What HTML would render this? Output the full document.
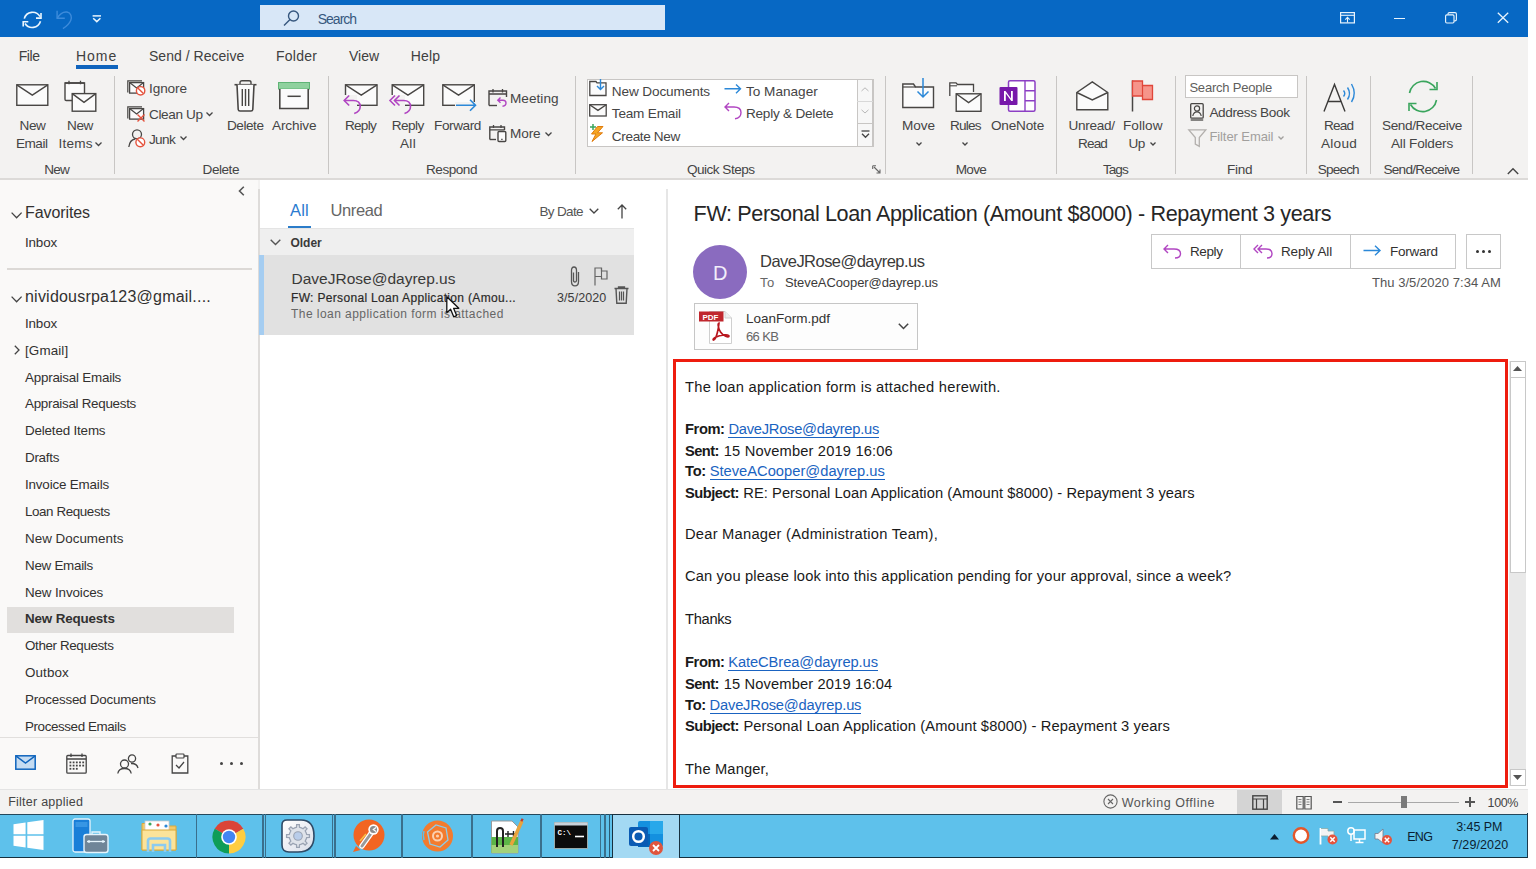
<!DOCTYPE html>
<html><head><meta charset="utf-8">
<style>
*{margin:0;padding:0;box-sizing:border-box}
html,body{width:1536px;height:869px;overflow:hidden;background:#fff;font-family:"Liberation Sans",sans-serif;color:#262626}
.a{position:absolute}
.t{position:absolute;white-space:nowrap;line-height:1}
svg{position:absolute;overflow:visible}
#win{position:absolute;left:0;top:0;width:1528px;height:858px;background:#f3f2f1;overflow:hidden}
</style></head><body>
<div id="win">
<div class="a" style="left:0px;top:0px;width:1528px;height:37px;background:#0768c4;"></div>
<div class="a" style="left:260px;top:5px;width:405px;height:25px;background:#d8e7f7;"></div>
<svg style="left:22px;top:10px;" width="21" height="20" viewBox="0 0 21 20"><g fill="none" stroke="#eaf5fd" stroke-width="1.6"><path d="M2.3 8.6A8.6 8.6 0 0 1 18 6.6"/><path d="M18.5 11.3A8.6 8.6 0 0 1 3 13.5"/><path d="M14 8.1H19V3"/><path d="M6.3 11.8H1.2V16.5"/></g></svg>
<svg style="left:55px;top:9px;" width="18" height="21" viewBox="0 0 18 21"><path d="M2.1 1.8V9.3H9.8" fill="none" stroke="#3d8bdb" stroke-width="1.4"/><path d="M2.3 9.1C5 4.5 9 2.6 12 3C16 3.6 17.2 8 15.7 11.5C14.2 15 11.2 17.6 7.9 19.6" fill="none" stroke="#3d8bdb" stroke-width="1.4"/></svg>
<svg style="left:92px;top:14px;" width="10" height="9" viewBox="0 0 10 9"><path d="M0.6 1.9h8.4" stroke="#eaf5fd" stroke-width="1.5"/><path d="M1.2 4.2l3.6 3.4l3.6-3.4" fill="none" stroke="#eaf5fd" stroke-width="1.5"/></svg>
<svg style="left:283px;top:10px;" width="17" height="16" viewBox="0 0 17 16"><circle cx="10.5" cy="6" r="5" fill="none" stroke="#36577e" stroke-width="1.4"/><path d="M7 9.5L1 15.5" stroke="#36577e" stroke-width="1.5"/></svg>
<div class="t" style="left:317.7px;top:11.50px;font-size:14px;color:#36577e;letter-spacing:-0.977px;">Search</div>
<svg style="left:1340px;top:12px;" width="15" height="11.5" viewBox="0 0 15 11.5"><rect x="0.6" y="0.6" width="13.8" height="10.3" fill="none" stroke="#e8f3fc" stroke-width="1.2"/><path d="M0.6 3.3h13.8" stroke="#e8f3fc" stroke-width="1.1"/><path d="M7.5 10.5V5.5M5.3 7.6l2.2-2.2 2.2 2.2" fill="none" stroke="#e8f3fc" stroke-width="1.1"/></svg>
<div class="a" style="left:1393.5px;top:17.6px;width:11.5px;height:1.3px;background:#e8f3fc;"></div>
<svg style="left:1445px;top:12px;" width="12" height="11.5" viewBox="0 0 12 11.5"><rect x="0.6" y="2.8" width="8.4" height="8.2" rx="1.2" fill="none" stroke="#e8f3fc" stroke-width="1.15"/><path d="M3 2.6V2A1.4 1.4 0 0 1 4.4 0.6H10A1.4 1.4 0 0 1 11.4 2V7.4A1.4 1.4 0 0 1 10 8.8H9.2" fill="none" stroke="#e8f3fc" stroke-width="1.15"/></svg>
<svg style="left:1496.5px;top:12px;" width="12" height="11.5" viewBox="0 0 12 11.5"><path d="M0.8 0.8L11.2 10.8M11.2 0.8L0.8 10.8" stroke="#e8f3fc" stroke-width="1.3"/></svg>
<div class="t" style="left:18.75px;top:48.50px;font-size:14px;color:#404040;letter-spacing:-0.428px;">File</div>
<div class="t" style="left:76px;top:48.50px;font-size:14px;color:#404040;letter-spacing:0.960px;">Home</div>
<div class="a" style="left:76px;top:65px;width:42px;height:4px;background:#1064bd;"></div>
<div class="t" style="left:149px;top:48.50px;font-size:14px;color:#404040;letter-spacing:0.025px;">Send / Receive</div>
<div class="t" style="left:276px;top:48.50px;font-size:14px;color:#404040;letter-spacing:0.252px;">Folder</div>
<div class="t" style="left:349px;top:48.50px;font-size:14px;color:#404040;letter-spacing:-0.023px;">View</div>
<div class="t" style="left:410.7px;top:48.50px;font-size:14px;color:#404040;letter-spacing:0.226px;">Help</div>
<div class="a" style="left:0px;top:178px;width:1528px;height:2px;background:#dcdad8;"></div>
<div class="a" style="left:0px;top:180px;width:258px;height:610px;background:#faf9f8;"></div>
<div class="a" style="left:258px;top:189px;width:2px;height:601px;background:#dedcda;"></div>
<div class="a" style="left:260px;top:180px;width:408px;height:610px;background:#ffffff;"></div>
<div class="a" style="left:666px;top:189px;width:2px;height:601px;background:#e6e6e6;"></div>
<div class="a" style="left:668px;top:180px;width:860px;height:610px;background:#ffffff;"></div>
<div class="a" style="left:0px;top:790px;width:1528px;height:24px;background:#f3f2f1;"></div>
<div class="a" style="left:0px;top:789px;width:1528px;height:1px;background:#e4e4e4;"></div>
<div class="t" style="left:8.2px;top:795.98px;font-size:12.5px;color:#444;letter-spacing:0.244px;">Filter applied</div>
<div class="a" style="left:0px;top:814px;width:1528px;height:45px;background:#5ec1eb;border-top:1.3px solid #23485c;border-bottom:2px solid #15303f"></div>
<div class="a" style="left:114px;top:76px;width:1px;height:98px;background:#c8c6c4;"></div>
<div class="a" style="left:328px;top:76px;width:1px;height:98px;background:#c8c6c4;"></div>
<div class="a" style="left:575px;top:76px;width:1px;height:98px;background:#c8c6c4;"></div>
<div class="a" style="left:885px;top:76px;width:1px;height:98px;background:#c8c6c4;"></div>
<div class="a" style="left:1056px;top:76px;width:1px;height:98px;background:#c8c6c4;"></div>
<div class="a" style="left:1175px;top:76px;width:1px;height:98px;background:#c8c6c4;"></div>
<div class="a" style="left:1306px;top:76px;width:1px;height:98px;background:#c8c6c4;"></div>
<div class="a" style="left:1370px;top:76px;width:1px;height:98px;background:#c8c6c4;"></div>
<div class="a" style="left:1472px;top:76px;width:1px;height:98px;background:#c8c6c4;"></div>
<svg style="left:16px;top:84px;" width="33" height="23" viewBox="0 0 33 23"><rect x="0.8" y="0.8" width="31" height="20.5" fill="#fbfbfb" stroke="#484644" stroke-width="1.4"/><path d="M0.8 0.8L16.3 11.05L31.8 0.8" fill="none" stroke="#484644" stroke-width="1.4"/></svg>
<div class="t" style="left:19.5px;top:119.44px;font-size:13.6px;color:#454545;letter-spacing:-0.401px;">New</div>
<div class="t" style="left:16px;top:137.44px;font-size:13.6px;color:#454545;letter-spacing:-0.520px;">Email</div>
<svg style="left:63px;top:80px;" width="36" height="33" viewBox="0 0 36 33"><path d="M9 20.5H3.2Q2 20.5 2 19.3V3H21.5V13" fill="#fbfbfb" stroke="#484644" stroke-width="1.4"/><path d="M2 3H21.5M6 0.8v3.5M17.5 0.8v3.5" stroke="#484644" stroke-width="1.3"/><rect x="9.2" y="13.6" width="23.6" height="17.6" fill="#fbfbfb" stroke="#484644" stroke-width="1.4"/><path d="M9.2 13.6L21.0 22.4L32.8 13.6" fill="none" stroke="#484644" stroke-width="1.4"/></svg>
<div class="t" style="left:67px;top:119.44px;font-size:13.6px;color:#454545;letter-spacing:-0.401px;">New</div>
<div class="t" style="left:58.6px;top:137.44px;font-size:13.6px;color:#454545;letter-spacing:0.153px;">Items</div>
<svg style="left:95px;top:141.5px;" width="7" height="4.5" viewBox="0 0 7 4.5"><path d="M0.5 0.5L3.5 3.5L6.5 0.5" fill="none" stroke="#454545" stroke-width="1.3"/></svg>
<div class="t" style="left:44.3px;top:162.74px;font-size:13.6px;color:#454545;letter-spacing:-0.834px;">New</div>
<svg style="left:127px;top:80px;" width="19" height="15" viewBox="0 0 19 15"><path d="M0.8 12.5V0.8H15" fill="none" stroke="#484644" stroke-width="1.2"/><rect x="2.6" y="2.6" width="14" height="10.5" fill="#fbfbfb" stroke="#484644" stroke-width="1.3"/><path d="M2.6 2.6L9.6 8L16.6 2.6" fill="none" stroke="#484644" stroke-width="1.2"/><circle cx="13.6" cy="10.8" r="4.2" fill="#fff" stroke="#e5533d" stroke-width="1.4"/><path d="M10.8 8L16.4 13.6" stroke="#e5533d" stroke-width="1.4"/></svg>
<div class="t" style="left:149px;top:82.14px;font-size:13.6px;color:#454545;letter-spacing:-0.091px;">Ignore</div>
<svg style="left:127px;top:106px;" width="19" height="16" viewBox="0 0 19 16"><path d="M0.8 12.5V0.8H15" fill="none" stroke="#484644" stroke-width="1.2"/><rect x="2.6" y="2.6" width="14" height="10.5" fill="#fbfbfb" stroke="#484644" stroke-width="1.3"/><path d="M2.6 2.6L9.6 8L16.6 2.6" fill="none" stroke="#484644" stroke-width="1.2"/><path d="M10.5 8.5L17.5 15.5M17.5 8.5L10.5 15.5" stroke="#e5533d" stroke-width="1.4"/></svg>
<div class="t" style="left:149px;top:108.24px;font-size:13.6px;color:#454545;letter-spacing:-0.384px;">Clean Up</div>
<svg style="left:206px;top:111.5px;" width="7" height="4.5" viewBox="0 0 7 4.5"><path d="M0.5 0.5L3.5 3.5L6.5 0.5" fill="none" stroke="#454545" stroke-width="1.3"/></svg>
<svg style="left:128px;top:129px;" width="18" height="19" viewBox="0 0 18 19"><circle cx="9" cy="5.3" r="4.5" fill="none" stroke="#484644" stroke-width="1.3"/><path d="M0.8 18C1.5 13 4 10.5 7 10" fill="none" stroke="#484644" stroke-width="1.3"/><circle cx="12.3" cy="13.3" r="4.4" fill="#fff" stroke="#e5533d" stroke-width="1.4"/><path d="M9.3 10.3L15.3 16.3" stroke="#e5533d" stroke-width="1.4"/></svg>
<div class="t" style="left:149px;top:132.74px;font-size:13.6px;color:#454545;letter-spacing:-0.680px;">Junk</div>
<svg style="left:180px;top:135.5px;" width="7" height="4.5" viewBox="0 0 7 4.5"><path d="M0.5 0.5L3.5 3.5L6.5 0.5" fill="none" stroke="#454545" stroke-width="1.3"/></svg>
<svg style="left:234px;top:80px;" width="23" height="32" viewBox="0 0 23 32"><path d="M6 4.5V2.5Q6 0.8 8 0.8H15Q17 0.8 17 2.5V4.5" fill="none" stroke="#484644" stroke-width="1.4"/><path d="M0.5 4.7H22.5" stroke="#484644" stroke-width="1.6"/><path d="M3 4.7L4.2 29.5Q4.4 31 6 31H17Q18.6 31 18.8 29.5L20 4.7" fill="#fbfbfb" stroke="#484644" stroke-width="1.6"/><path d="M8.3 9V26M11.5 9V26M14.7 9V26" stroke="#484644" stroke-width="1.4"/></svg>
<div class="t" style="left:227px;top:119.44px;font-size:13.6px;color:#454545;letter-spacing:-0.466px;">Delete</div>
<svg style="left:278px;top:82px;" width="32" height="28" viewBox="0 0 32 28"><rect x="0.5" y="0.5" width="31" height="6.5" fill="#8fd19e" stroke="#5fb476" stroke-width="1"/><path d="M1.8 7V26.5H30.2V7" fill="#fbfbfb" stroke="#484644" stroke-width="1.6"/><path d="M9.5 14.3H22.7" stroke="#484644" stroke-width="1.5"/></svg>
<div class="t" style="left:272px;top:119.44px;font-size:13.6px;color:#454545;letter-spacing:-0.133px;">Archive</div>
<div class="t" style="left:202.6px;top:162.74px;font-size:13.6px;color:#454545;letter-spacing:-0.483px;">Delete</div>
<svg style="left:343px;top:84px;" width="35" height="31" viewBox="0 0 35 31"><rect x="2.5" y="0.8" width="31.5" height="20.5" fill="#fbfbfb" stroke="#484644" stroke-width="1.4"/><path d="M2.5 0.8L18.25 11.05L34.0 0.8" fill="none" stroke="#484644" stroke-width="1.4"/><rect x="0" y="11" width="14" height="20" fill="#f3f2f1"/><path d="M6.2 11.5L1.2 16.5L6.2 21.5" fill="none" stroke="#b146c2" stroke-width="1.6"/><path d="M1.2 16.5H10.2Q17.2 16.5 17.2 22.5Q17.2 27.5 11.2 29.5" fill="none" stroke="#b146c2" stroke-width="1.6"/></svg>
<div class="t" style="left:345px;top:119.44px;font-size:13.6px;color:#454545;letter-spacing:-0.753px;">Reply</div>
<svg style="left:389px;top:84px;" width="36" height="31" viewBox="0 0 36 31"><rect x="3.2" y="0.8" width="31.5" height="20.5" fill="#fbfbfb" stroke="#484644" stroke-width="1.4"/><path d="M3.2 0.8L18.95 11.05L34.7 0.8" fill="none" stroke="#484644" stroke-width="1.4"/><rect x="0" y="11" width="16" height="20" fill="#f3f2f1"/><path d="M10.5 11.5L5.5 16.5L10.5 21.5" fill="none" stroke="#b146c2" stroke-width="1.6"/><path d="M5.5 16.5H14.5Q21.5 16.5 21.5 22.5Q21.5 27.5 15.5 29.5" fill="none" stroke="#b146c2" stroke-width="1.6"/><path d="M6 11.5L1 16.5L6 21.5" fill="none" stroke="#b146c2" stroke-width="1.6"/></svg>
<div class="t" style="left:391.7px;top:119.44px;font-size:13.6px;color:#454545;letter-spacing:-0.553px;">Reply</div>
<div class="t" style="left:400px;top:137.44px;font-size:13.6px;color:#454545;letter-spacing:0.297px;">All</div>
<svg style="left:442px;top:84px;" width="36" height="24" viewBox="0 0 36 24"><rect x="0.8" y="0.8" width="31.5" height="20.5" fill="#fbfbfb" stroke="#484644" stroke-width="1.4"/><path d="M0.8 0.8L16.55 11.05L32.3 0.8" fill="none" stroke="#484644" stroke-width="1.4"/><rect x="13" y="18" width="20" height="6" fill="#f3f2f1"/><path d="M14 21.3H33.5M28 15.8L33.5 21.3L28 26.8" fill="none" stroke="#2b88d8" stroke-width="1.6"/></svg>
<div class="t" style="left:434px;top:119.44px;font-size:13.6px;color:#454545;letter-spacing:-0.408px;">Forward</div>
<svg style="left:488px;top:88px;" width="20" height="19" viewBox="0 0 20 19"><path d="M1 17.5V3H18.5V9" fill="none" stroke="#484644" stroke-width="1.4"/><path d="M1 17.5H9" stroke="#484644" stroke-width="1.4"/><path d="M1 6H18.5M5 1v3.5M14.5 1v3.5" stroke="#484644" stroke-width="1.3"/><path d="M12.5 9.5L9.8 12.2L12.5 14.8M9.8 12.2H15Q18 12.2 18 15Q18 17.8 14.5 18.3" fill="none" stroke="#b146c2" stroke-width="1.4"/></svg>
<div class="t" style="left:510px;top:91.84px;font-size:13.6px;color:#454545;letter-spacing:0.032px;">Meeting</div>
<svg style="left:489px;top:124px;" width="18" height="18" viewBox="0 0 18 18"><path d="M0.8 15.5V3H15.5V6" fill="none" stroke="#484644" stroke-width="1.4"/><path d="M0.8 15.5H7" stroke="#484644" stroke-width="1.4"/><path d="M0.8 5.8H15.5M4.5 1v3M12 1v3" stroke="#484644" stroke-width="1.3"/><rect x="9" y="7.5" width="7.8" height="10" rx="1" fill="#fbfbfb" stroke="#484644" stroke-width="1.4"/><path d="M12.2 15.3h1.4" stroke="#484644" stroke-width="1.2"/></svg>
<div class="t" style="left:510px;top:126.94px;font-size:13.6px;color:#454545;letter-spacing:-0.121px;">More</div>
<svg style="left:545px;top:132px;" width="7" height="4.5" viewBox="0 0 7 4.5"><path d="M0.5 0.5L3.5 3.5L6.5 0.5" fill="none" stroke="#454545" stroke-width="1.3"/></svg>
<div class="t" style="left:426px;top:162.74px;font-size:13.6px;color:#454545;letter-spacing:-0.489px;">Respond</div>
<div class="a" style="left:586.5px;top:78.5px;width:287px;height:68.5px;background:#ffffff;border:1px solid #c8c6c4"></div>
<div class="a" style="left:857px;top:78.5px;width:16px;height:68.5px;background:#f7f7f7;border:1px solid #c8c6c4"></div>
<div class="a" style="left:857px;top:101px;width:16px;height:1px;background:#d8d8d8;"></div>
<div class="a" style="left:857px;top:123px;width:16px;height:1px;background:#c8c6c4;"></div>
<svg style="left:861px;top:87px;" width="8" height="5" viewBox="0 0 8 5"><path d="M0.5 4L4 0.8L7.5 4" fill="none" stroke="#b8b8b8" stroke-width="1"/></svg>
<svg style="left:861px;top:109px;" width="8" height="5" viewBox="0 0 8 5"><path d="M0.5 0.8L4 4L7.5 0.8" fill="none" stroke="#b8b8b8" stroke-width="1"/></svg>
<svg style="left:860.5px;top:130px;" width="9" height="9" viewBox="0 0 9 9"><path d="M0.5 1H8.5" stroke="#444" stroke-width="1.3"/><path d="M1 3.8L4.5 7.3L8 3.8" fill="none" stroke="#444" stroke-width="1.3"/></svg>
<svg style="left:589px;top:79px;" width="18" height="18" viewBox="0 0 18 18"><path d="M0.8 2.5H7L8 3.8H17V16.5H0.8Z" fill="#fbfbfb" stroke="#484644" stroke-width="1.3"/><path d="M11.5 0V10.5M8 7L11.5 10.5L15 7" fill="none" stroke="#2b88d8" stroke-width="1.4"/></svg>
<div class="t" style="left:611.8px;top:85.34px;font-size:13.6px;color:#454545;letter-spacing:-0.118px;">New Documents</div>
<svg style="left:589px;top:103.5px;" width="18" height="13" viewBox="0 0 18 13"><rect x="0.7" y="0.7" width="16.5" height="11.3" fill="#fbfbfb" stroke="#484644" stroke-width="1.3"/><path d="M0.7 0.7L8.95 6.3500000000000005L17.2 0.7" fill="none" stroke="#484644" stroke-width="1.3"/></svg>
<div class="t" style="left:611.8px;top:107.44px;font-size:13.6px;color:#454545;letter-spacing:-0.202px;">Team Email</div>
<svg style="left:589px;top:123px;" width="16" height="19" viewBox="0 0 16 19"><path d="M8.5 3.5H14L8.5 9.8H13.5L3 18.5L7 11H2.5Z" fill="#f5a623" stroke="#e07b0d" stroke-width="1"/><path d="M1 4H7M4 1V7" stroke="#3aa55d" stroke-width="1.5"/></svg>
<div class="t" style="left:611.8px;top:129.54px;font-size:13.6px;color:#454545;letter-spacing:-0.358px;">Create New</div>
<svg style="left:723.5px;top:84px;" width="18" height="10" viewBox="0 0 18 10"><path d="M0.5 4.8H16.5M12 0.5L16.5 4.8L12 9.2" fill="none" stroke="#2b88d8" stroke-width="1.4"/></svg>
<div class="t" style="left:745.9px;top:85.34px;font-size:13.6px;color:#454545;letter-spacing:0.010px;">To Manager</div>
<svg style="left:723.5px;top:102px;" width="19" height="18" viewBox="0 0 19 18"><path d="M5 1L1 5L5 9M1 5H10Q17 5 17 10.5Q17 16 11 16.8" fill="none" stroke="#b146c2" stroke-width="1.4"/></svg>
<div class="t" style="left:745.9px;top:107.44px;font-size:13.6px;color:#454545;letter-spacing:-0.227px;">Reply &amp; Delete</div>
<svg style="left:872px;top:165px;" width="9" height="9" viewBox="0 0 9 9"><path d="M0.5 0.5H8.5V8.5H0.5Z" fill="none" stroke="#777" stroke-width="0"/><path d="M0.7 0.7H4M0.7 0.7V4M2 2L8 8M8 4.5V8H4.5" fill="none" stroke="#666" stroke-width="1.1"/></svg>
<div class="t" style="left:687px;top:162.74px;font-size:13.6px;color:#454545;letter-spacing:-0.527px;">Quick Steps</div>
<svg style="left:902px;top:78px;" width="33" height="31" viewBox="0 0 33 31"><path d="M0.8 6V29.5H31.5V9H13.5L11.5 6Z" fill="#fbfbfb" stroke="#484644" stroke-width="1.4"/><path d="M0.8 9H13.5" stroke="#484644" stroke-width="1.2"/><path d="M21 0V19M15.5 13.5L21 19L26.5 13.5" fill="none" stroke="#2b88d8" stroke-width="1.5"/></svg>
<div class="t" style="left:902px;top:119.44px;font-size:13.6px;color:#454545;letter-spacing:-0.062px;">Move</div>
<svg style="left:915.5px;top:141.5px;" width="6" height="4.0" viewBox="0 0 6 4.0"><path d="M0.5 0.5L3.0 3.0L5.5 0.5" fill="none" stroke="#454545" stroke-width="1.3"/></svg>
<svg style="left:949px;top:80px;" width="33" height="32" viewBox="0 0 33 32"><path d="M0.8 16V2.8H7L8.5 4.5H24.5V12" fill="#fbfbfb" stroke="#484644" stroke-width="1.3"/><path d="M0.8 5.8H8" stroke="#484644" stroke-width="1.1"/><rect x="7.2" y="13.8" width="24.8" height="17.5" fill="#fbfbfb" stroke="#484644" stroke-width="1.4"/><path d="M7.2 13.8L19.6 22.55L32.0 13.8" fill="none" stroke="#484644" stroke-width="1.4"/></svg>
<div class="t" style="left:950px;top:119.44px;font-size:13.6px;color:#454545;letter-spacing:-0.793px;">Rules</div>
<svg style="left:962px;top:141.5px;" width="6" height="4.0" viewBox="0 0 6 4.0"><path d="M0.5 0.5L3.0 3.0L5.5 0.5" fill="none" stroke="#454545" stroke-width="1.3"/></svg>
<svg style="left:999px;top:80px;" width="37" height="32" viewBox="0 0 37 32"><rect x="9.5" y="0.8" width="26.5" height="30.5" rx="1.5" fill="#fff" stroke="#8c3fc4" stroke-width="1.5"/><path d="M26 0.8V31.3M26 10.8H36M26 20.8H36" stroke="#8c3fc4" stroke-width="1.4"/><rect x="0.5" y="7" width="18" height="18" rx="1" fill="#7719aa"/><path d="M5 21V11H6.5L12 18.5V11H13.8V21H12.3L6.8 13.5V21Z" fill="#fff"/></svg>
<div class="t" style="left:991px;top:119.44px;font-size:13.6px;color:#454545;letter-spacing:-0.203px;">OneNote</div>
<div class="t" style="left:955.8px;top:162.74px;font-size:13.6px;color:#454545;letter-spacing:-0.763px;">Move</div>
<svg style="left:1076px;top:81px;" width="33" height="30" viewBox="0 0 33 30"><path d="M0.8 11.5L16.3 0.8L31.8 11.5V28.8H0.8Z" fill="#fbfbfb" stroke="#484644" stroke-width="1.4"/><path d="M0.8 11.5L16.3 19L31.8 11.5" fill="none" stroke="#484644" stroke-width="1.4"/></svg>
<div class="t" style="left:1068.6px;top:119.44px;font-size:13.6px;color:#454545;letter-spacing:-0.325px;">Unread/</div>
<div class="t" style="left:1078px;top:137.44px;font-size:13.6px;color:#454545;letter-spacing:-0.875px;">Read</div>
<svg style="left:1131px;top:80px;" width="23" height="32" viewBox="0 0 23 32"><path d="M1.5 0.5V31.5" stroke="#484644" stroke-width="1.5"/><path d="M1.5 1H11.5V5.5H21.5V19.5H11.5V16H1.5Z" fill="#f6948a" stroke="#e0463a" stroke-width="1.3"/><path d="M11.5 5.5V16" stroke="#e0463a" stroke-width="1.2"/></svg>
<div class="t" style="left:1123px;top:119.44px;font-size:13.6px;color:#454545;letter-spacing:0.036px;">Follow</div>
<div class="t" style="left:1128.5px;top:137.44px;font-size:13.6px;color:#454545;letter-spacing:-0.445px;">Up</div>
<svg style="left:1149.5px;top:141.5px;" width="6" height="4.0" viewBox="0 0 6 4.0"><path d="M0.5 0.5L3.0 3.0L5.5 0.5" fill="none" stroke="#454545" stroke-width="1.3"/></svg>
<div class="t" style="left:1103px;top:162.74px;font-size:13.6px;color:#454545;letter-spacing:-1.005px;">Tags</div>
<div class="a" style="left:1184.8px;top:74.9px;width:113px;height:23.5px;background:#ffffff;border:1px solid #c8c6c4"></div>
<div class="t" style="left:1189.4px;top:80.65px;font-size:13px;color:#605e5c;letter-spacing:-0.206px;">Search People</div>
<svg style="left:1190px;top:102.5px;" width="14" height="18" viewBox="0 0 14 18"><rect x="0.7" y="0.7" width="12.5" height="14.5" rx="1" fill="none" stroke="#484644" stroke-width="1.3"/><path d="M0.7 17H13.2" stroke="#484644" stroke-width="1.3"/><circle cx="7" cy="5.5" r="2.6" fill="none" stroke="#484644" stroke-width="1.2"/><path d="M2.8 13Q3.5 8.8 7 8.8Q10.5 8.8 11.2 13" fill="none" stroke="#484644" stroke-width="1.2"/></svg>
<div class="t" style="left:1209.4px;top:105.94px;font-size:13.6px;color:#454545;letter-spacing:-0.370px;">Address Book</div>
<svg style="left:1187.5px;top:128.5px;" width="19" height="18" viewBox="0 0 19 18"><path d="M0.8 0.8H17.8L11.3 8.5V17.3L7.3 15V8.5Z" fill="none" stroke="#b3b0ad" stroke-width="1.3"/></svg>
<div class="t" style="left:1209.4px;top:129.95px;font-size:13px;color:#a19f9d;letter-spacing:-0.085px;">Filter Email</div>
<svg style="left:1278px;top:135.5px;" width="6" height="4.0" viewBox="0 0 6 4.0"><path d="M0.5 0.5L3.0 3.0L5.5 0.5" fill="none" stroke="#a19f9d" stroke-width="1.3"/></svg>
<div class="t" style="left:1227px;top:162.74px;font-size:13.6px;color:#454545;letter-spacing:-0.263px;">Find</div>
<svg style="left:1323px;top:80px;" width="33" height="33" viewBox="0 0 33 33"><path d="M1 31.5L11.5 4.5L22 31.5M5 21.5H18" fill="none" stroke="#3b3a39" stroke-width="1.4"/><path d="M20.5 10.5Q23 13.5 20.5 16.5M24.5 7.5Q28.5 13.5 24.5 19.5M28.5 4Q34 13.5 28.5 22" fill="none" stroke="#2b88d8" stroke-width="1.4"/></svg>
<div class="t" style="left:1324px;top:119.44px;font-size:13.6px;color:#454545;letter-spacing:-0.775px;">Read</div>
<div class="t" style="left:1321px;top:137.44px;font-size:13.6px;color:#454545;letter-spacing:0.244px;">Aloud</div>
<div class="t" style="left:1317.8px;top:162.74px;font-size:13.6px;color:#454545;letter-spacing:-0.852px;">Speech</div>
<svg style="left:1406px;top:80px;" width="34" height="33" viewBox="0 0 34 33"><path d="M3.5 13A14 14 0 0 1 29.5 8.5M30.5 20A14 14 0 0 1 4.5 24.5" fill="none" stroke="#3aa55d" stroke-width="1.6"/><path d="M31 2V9.5H23.5M3 31V23.5H10.5" fill="none" stroke="#3aa55d" stroke-width="1.6"/></svg>
<div class="t" style="left:1382px;top:119.44px;font-size:13.6px;color:#454545;letter-spacing:-0.387px;">Send/Receive</div>
<div class="t" style="left:1391px;top:137.44px;font-size:13.6px;color:#454545;letter-spacing:-0.202px;">All Folders</div>
<div class="t" style="left:1383.4px;top:162.74px;font-size:13.6px;color:#454545;letter-spacing:-0.720px;">Send/Receive</div>
<svg style="left:1507px;top:168px;" width="12" height="7" viewBox="0 0 12 7"><path d="M0.8 6L6 0.8L11.2 6" fill="none" stroke="#444" stroke-width="1.4"/></svg>
<svg style="left:238px;top:186px;" width="7" height="10" viewBox="0 0 7 10"><path d="M5.8 0.8L1.5 5L5.8 9.2" fill="none" stroke="#555" stroke-width="1.6"/></svg>
<svg style="left:10.5px;top:211.5px;" width="12" height="7" viewBox="0 0 12 7"><path d="M0.6 0.6L5.6 5.8L10.6 0.6" fill="none" stroke="#444" stroke-width="1.3"/></svg>
<div class="t" style="left:25px;top:205.30px;font-size:16px;color:#323130;letter-spacing:-0.089px;">Favorites</div>
<div class="t" style="left:25px;top:236.31px;font-size:13.4px;color:#323130;letter-spacing:-0.153px;">Inbox</div>
<div class="a" style="left:7px;top:268px;width:245px;height:1.5px;background:#dcd9d6;"></div>
<svg style="left:10.5px;top:295.5px;" width="12" height="7" viewBox="0 0 12 7"><path d="M0.6 0.6L5.6 5.8L10.6 0.6" fill="none" stroke="#444" stroke-width="1.3"/></svg>
<div class="t" style="left:25px;top:288.70px;font-size:16px;color:#323130;letter-spacing:0.217px;">nividousrpa123@gmail....</div>
<div class="a" style="left:7px;top:607px;width:227px;height:26px;background:#e1dfdd;"></div>
<div class="t" style="left:25px;top:316.81px;font-size:13.4px;color:#323130;letter-spacing:-0.153px;">Inbox</div>
<div class="t" style="left:25px;top:343.68px;font-size:13.4px;color:#323130;letter-spacing:0.125px;">[Gmail]</div>
<div class="t" style="left:25px;top:370.55px;font-size:13.4px;color:#323130;letter-spacing:-0.227px;">Appraisal Emails</div>
<div class="t" style="left:25px;top:397.42px;font-size:13.4px;color:#323130;letter-spacing:-0.285px;">Appraisal Requests</div>
<div class="t" style="left:25px;top:424.29px;font-size:13.4px;color:#323130;letter-spacing:-0.171px;">Deleted Items</div>
<div class="t" style="left:25px;top:451.16px;font-size:13.4px;color:#323130;letter-spacing:-0.253px;">Drafts</div>
<div class="t" style="left:25px;top:478.03px;font-size:13.4px;color:#323130;letter-spacing:-0.166px;">Invoice Emails</div>
<div class="t" style="left:25px;top:504.90px;font-size:13.4px;color:#323130;letter-spacing:-0.407px;">Loan Requests</div>
<div class="t" style="left:25px;top:531.77px;font-size:13.4px;color:#323130;letter-spacing:0.013px;">New Documents</div>
<div class="t" style="left:25px;top:558.64px;font-size:13.4px;color:#323130;letter-spacing:-0.269px;">New Emails</div>
<div class="t" style="left:25px;top:585.51px;font-size:13.4px;color:#323130;letter-spacing:-0.128px;">New Invoices</div>
<div class="t" style="left:25px;top:612.38px;font-size:13.4px;color:#323130;font-weight:700;letter-spacing:-0.153px;">New Requests</div>
<div class="t" style="left:25px;top:639.25px;font-size:13.4px;color:#323130;letter-spacing:-0.377px;">Other Requests</div>
<div class="t" style="left:25px;top:666.12px;font-size:13.4px;color:#323130;letter-spacing:0.119px;">Outbox</div>
<div class="t" style="left:25px;top:692.99px;font-size:13.4px;color:#323130;letter-spacing:-0.212px;">Processed Documents</div>
<div class="t" style="left:25px;top:719.86px;font-size:13.4px;color:#323130;letter-spacing:-0.398px;">Processed Emails</div>
<svg style="left:14px;top:345px;" width="6" height="10" viewBox="0 0 6 10"><path d="M0.8 0.8L5 5L0.8 9.2" fill="none" stroke="#444" stroke-width="1.3"/></svg>
<div class="a" style="left:0px;top:737px;width:258px;height:1px;background:#e1dfdd;"></div>
<svg style="left:15px;top:755px;" width="21" height="15" viewBox="0 0 21 15"><rect x="0.8" y="0.8" width="19.4" height="13.4" fill="#c5dcf2" stroke="#1065bd" stroke-width="1.5"/><path d="M0.8 0.8L10.5 8L20.2 0.8" fill="none" stroke="#1065bd" stroke-width="1.5"/></svg>
<svg style="left:66px;top:753px;" width="21" height="21" viewBox="0 0 21 21"><rect x="0.8" y="2.5" width="19.4" height="17.7" rx="1" fill="none" stroke="#444" stroke-width="1.3"/><path d="M0.8 6H20.2M5 0.5V4M16 0.5V4" stroke="#444" stroke-width="1.3"/><rect x="3.5" y="8.5" width="1.8" height="1.8" fill="#444"/><rect x="6.7" y="8.5" width="1.8" height="1.8" fill="#444"/><rect x="9.9" y="8.5" width="1.8" height="1.8" fill="#444"/><rect x="13.100000000000001" y="8.5" width="1.8" height="1.8" fill="#444"/><rect x="16.3" y="8.5" width="1.8" height="1.8" fill="#444"/><rect x="3.5" y="11.7" width="1.8" height="1.8" fill="#444"/><rect x="6.7" y="11.7" width="1.8" height="1.8" fill="#444"/><rect x="9.9" y="11.7" width="1.8" height="1.8" fill="#444"/><rect x="13.100000000000001" y="11.7" width="1.8" height="1.8" fill="#444"/><rect x="16.3" y="11.7" width="1.8" height="1.8" fill="#444"/><rect x="3.5" y="14.9" width="1.8" height="1.8" fill="#444"/><rect x="6.7" y="14.9" width="1.8" height="1.8" fill="#444"/><rect x="9.9" y="14.9" width="1.8" height="1.8" fill="#444"/></svg>
<svg style="left:117px;top:754px;" width="22" height="20" viewBox="0 0 22 20"><circle cx="7.5" cy="10" r="4" fill="none" stroke="#444" stroke-width="1.3"/><path d="M0.8 19.5Q1.5 14.5 7.5 14.5Q13.5 14.5 14.2 19.5" fill="none" stroke="#444" stroke-width="1.3"/><circle cx="15" cy="4.5" r="3.6" fill="none" stroke="#444" stroke-width="1.3"/><path d="M14 9.5Q19.8 9.2 21 14" fill="none" stroke="#444" stroke-width="1.3"/></svg>
<svg style="left:171px;top:753px;" width="18" height="21" viewBox="0 0 18 21"><path d="M5 3H1.2V20H16.8V3H13" fill="none" stroke="#444" stroke-width="1.3"/><rect x="5" y="1" width="8" height="4" rx="0.8" fill="none" stroke="#444" stroke-width="1.2"/><path d="M5 12L8 15L13 9" fill="none" stroke="#444" stroke-width="1.3"/></svg>
<div class="a" style="left:220px;top:762px;width:3px;height:3px;background:#444;border-radius:50%"></div>
<div class="a" style="left:230px;top:762px;width:3px;height:3px;background:#444;border-radius:50%"></div>
<div class="a" style="left:240px;top:762px;width:3px;height:3px;background:#444;border-radius:50%"></div>
<div class="t" style="left:290px;top:202.17px;font-size:16.5px;color:#2a7bd0;letter-spacing:0.152px;">All</div>
<div class="t" style="left:330.5px;top:202.17px;font-size:16.5px;color:#666666;letter-spacing:-0.371px;">Unread</div>
<div class="a" style="left:288px;top:226px;width:23px;height:2.5px;background:#2b7cc9;"></div>
<div class="t" style="left:539.4px;top:204.93px;font-size:13.5px;color:#555555;letter-spacing:-0.633px;">By Date</div>
<svg style="left:589px;top:208px;" width="10" height="6" viewBox="0 0 10 6"><path d="M0.7 0.7L5 5L9.3 0.7" fill="none" stroke="#444" stroke-width="1.3"/></svg>
<svg style="left:617px;top:204px;" width="10" height="15" viewBox="0 0 10 15"><path d="M5 14.5V1M0.8 5.2L5 1L9.2 5.2" fill="none" stroke="#444" stroke-width="1.3"/></svg>
<div class="a" style="left:260px;top:228px;width:374px;height:27px;background:#efefef;"></div>
<div class="a" style="left:260px;top:228px;width:374px;height:1px;background:#e4e4e4;"></div>
<svg style="left:269.5px;top:239px;" width="11" height="6.5" viewBox="0 0 11 6.5"><path d="M0.7 0.7L5.5 5.5L10.3 0.7" fill="none" stroke="#555" stroke-width="1.4"/></svg>
<div class="t" style="left:290.5px;top:236.50px;font-size:12px;color:#3b3a39;font-weight:700;letter-spacing:-0.029px;">Older</div>
<div class="a" style="left:260px;top:255px;width:374px;height:80px;background:#e1e1e1;"></div>
<div class="a" style="left:259px;top:255px;width:4.5px;height:80px;background:#a5cdf1;"></div>
<div class="t" style="left:291.5px;top:271.43px;font-size:15.5px;color:#3b3a39;letter-spacing:0.003px;">DaveJRose@dayrep.us</div>
<div class="t" style="left:291px;top:292.00px;font-size:12px;color:#2b2a29;letter-spacing:0.327px;-webkit-text-stroke:0.2px #2b2a29;">FW: Personal Loan Application (Amou...</div>
<div class="t" style="left:291px;top:308.30px;font-size:12px;color:#666;letter-spacing:0.451px;">The loan application form is attached</div>
<div class="t" style="left:557px;top:291.88px;font-size:12.5px;color:#3b3a39;letter-spacing:0.091px;">3/5/2020</div>
<svg style="left:569px;top:266px;" width="13" height="21" viewBox="0 0 13 21"><path d="M9.5 6V15.5Q9.5 19.8 6 19.8Q2.5 19.8 2.5 15.5V4.5Q2.5 1 5 1Q7.5 1 7.5 4.5V14.5Q7.5 16 6 16Q4.5 16 4.5 14.5V6.5" fill="none" stroke="#555" stroke-width="1.3"/></svg>
<svg style="left:594px;top:267px;" width="14" height="19" viewBox="0 0 14 19"><path d="M1 18.5V1H7.5V4H13V12H7.5V9.5H1" fill="none" stroke="#666" stroke-width="1.2"/><path d="M7.5 1V9.5" stroke="#666" stroke-width="1.1"/></svg>
<svg style="left:614px;top:286px;" width="15" height="18" viewBox="0 0 15 18"><path d="M0.5 2.5H14.5M4.5 2.5V1H10.5V2.5" fill="none" stroke="#555" stroke-width="1.3"/><path d="M2 2.5L2.8 17.2H12.2L13 2.5" fill="none" stroke="#555" stroke-width="1.4"/><path d="M5.5 5.5V14.5M7.5 5.5V14.5M9.5 5.5V14.5" stroke="#555" stroke-width="1.2"/></svg>
<svg style="left:445.8px;top:296.3px;" width="14" height="23" viewBox="0 0 14 23"><path d="M0.8 0.8V16.8L4.6 13.3L7.7 20.8L10.6 19.6L7.6 12.3H12.8Z" fill="#fff" stroke="#111" stroke-width="1.3" stroke-linejoin="round"/></svg>
<div class="t" style="left:693.6px;top:202.84px;font-size:21.6px;color:#262626;letter-spacing:-0.385px;">FW: Personal Loan Application (Amount $8000) - Repayment 3 years</div>
<div class="a" style="left:693px;top:244.5px;width:54px;height:54px;background:#8a6bbf;border-radius:50%"></div>
<div class="t" style="left:713px;top:262.50px;font-size:20px;color:#f2eefa;letter-spacing:-1.953px;">D</div>
<div class="t" style="left:760px;top:253.37px;font-size:16.5px;color:#3b3a39;letter-spacing:-0.532px;">DaveJRose@dayrep.us</div>
<div class="t" style="left:760px;top:276.35px;font-size:13px;color:#666;letter-spacing:0.433px;">To</div>
<div class="t" style="left:785px;top:276.35px;font-size:13px;color:#3b3a39;letter-spacing:-0.084px;">SteveACooper@dayrep.us</div>
<div class="a" style="left:693.5px;top:302.5px;width:224px;height:47.5px;background:#fdfdfd;border:1px solid #c6c6c6"></div>
<svg style="left:698px;top:310px;" width="36" height="34" viewBox="0 0 36 34"><path d="M11.5 1.5H27L33.5 8V33.5H11.5Z" fill="#fff" stroke="#cfcfcf" stroke-width="1"/><path d="M27 1.5V8H33.5" fill="#eee" stroke="#cfcfcf" stroke-width="1"/><rect x="1" y="1.5" width="24.5" height="10" fill="#c0262d"/><text x="4.5" y="9.6" font-family="Liberation Sans" font-size="8" font-weight="700" fill="#fff">PDF</text><path d="M21 13C19.5 13 20 18 22.5 22C25 26 31 28 31 26C31 24 23 24.5 17 27.5C14 29 15 31 16.5 29.5C18.5 27.5 20.5 19 21 13Z" fill="none" stroke="#b8161e" stroke-width="1.7"/></svg>
<div class="t" style="left:746px;top:311.82px;font-size:13.5px;color:#323130;letter-spacing:-0.004px;">LoanForm.pdf</div>
<div class="t" style="left:746px;top:329.95px;font-size:13px;color:#666;letter-spacing:-0.624px;">66 KB</div>
<svg style="left:897.5px;top:322.5px;" width="11" height="7" viewBox="0 0 11 7"><path d="M0.8 0.8L5.5 5.5L10.2 0.8" fill="none" stroke="#444" stroke-width="1.5"/></svg>
<div class="a" style="left:1150.5px;top:233.5px;width:305px;height:35px;background:#ffffff;border:1px solid #c8c8c8"></div>
<div class="a" style="left:1240px;top:233.5px;width:1px;height:35px;background:#c8c8c8;"></div>
<div class="a" style="left:1350px;top:233.5px;width:1px;height:35px;background:#c8c8c8;"></div>
<svg style="left:1163px;top:244px;" width="19" height="15" viewBox="0 0 19 15"><path d="M5 1L1 5L5 9M1 5H11Q17.5 5 17.5 9.5Q17.5 14 12 14" fill="none" stroke="#b146c2" stroke-width="1.4"/></svg>
<div class="t" style="left:1190px;top:245.13px;font-size:13.5px;color:#323130;letter-spacing:-0.383px;">Reply</div>
<svg style="left:1252.5px;top:244px;" width="20" height="15" viewBox="0 0 20 15"><path d="M5 1L1 5L5 9" fill="none" stroke="#b146c2" stroke-width="1.4"/><path d="M9 1L5 5L9 9M5 5H13Q19 5 19 9.5Q19 14 14 14" fill="none" stroke="#b146c2" stroke-width="1.4"/></svg>
<div class="t" style="left:1281px;top:245.13px;font-size:13.5px;color:#323130;letter-spacing:-0.170px;">Reply All</div>
<svg style="left:1363px;top:245px;" width="18" height="11" viewBox="0 0 18 11"><path d="M0.5 5.5H17M12 0.8L17 5.5L12 10.2" fill="none" stroke="#2b88d8" stroke-width="1.4"/></svg>
<div class="t" style="left:1390px;top:245.13px;font-size:13.5px;color:#323130;letter-spacing:-0.245px;">Forward</div>
<div class="a" style="left:1465.5px;top:233.5px;width:35.5px;height:35px;background:#ffffff;border:1px solid #c8c8c8"></div>
<div class="a" style="left:1475.5px;top:249.5px;width:3.2px;height:3.2px;background:#333;border-radius:50%"></div>
<div class="a" style="left:1481.5px;top:249.5px;width:3.2px;height:3.2px;background:#333;border-radius:50%"></div>
<div class="a" style="left:1487.5px;top:249.5px;width:3.2px;height:3.2px;background:#333;border-radius:50%"></div>
<div class="t" style="left:1372px;top:276.25px;font-size:13px;color:#555;letter-spacing:0.043px;">Thu 3/5/2020 7:34 AM</div>
<div class="a" style="left:673px;top:359px;width:835px;height:429px;background:#ffffff;border:3.5px solid #ee1c0e"></div>
<div class="a" style="left:1509px;top:361px;width:17px;height:425px;background:#e9e9e9;"></div>
<div class="a" style="left:1509.5px;top:361px;width:16px;height:16.5px;background:#fff;border:1px solid #c8c8c8"></div>
<svg style="left:1513px;top:366px;" width="9" height="5" viewBox="0 0 9 5"><path d="M0 5L4.5 0L9 5Z" fill="#555"/></svg>
<div class="a" style="left:1509.5px;top:377px;width:16px;height:196px;background:#ffffff;border:1px solid #c8c8c8"></div>
<div class="a" style="left:1509.5px;top:769px;width:16px;height:16.5px;background:#fff;border:1px solid #c8c8c8"></div>
<svg style="left:1513px;top:775px;" width="9" height="5" viewBox="0 0 9 5"><path d="M0 0L4.5 5L9 0Z" fill="#555"/></svg>
<div class="t" style="left:685px;top:379.50px;font-size:14.7px;color:#1a1a1a;letter-spacing:0.255px;">The loan application form is attached herewith.</div>
<div class="t" style="left:685px;top:422.11px;font-size:14.7px;color:#1a1a1a;font-weight:700;letter-spacing:-0.405px;">From:</div>
<div class="t" style="left:728.4px;top:422.11px;font-size:14.7px;color:#1a63c1;letter-spacing:-0.250px;">DaveJRose@dayrep.us</div>
<div class="a" style="left:728.4px;top:437.1px;width:150.6px;height:1px;background:#1a63c1;"></div>
<div class="t" style="left:685px;top:443.70px;font-size:14.7px;color:#1a1a1a;font-weight:700;letter-spacing:-0.564px;">Sent:</div>
<div class="t" style="left:723.8px;top:443.70px;font-size:14.7px;color:#1a1a1a;letter-spacing:0.152px;">15 November 2019 16:06</div>
<div class="t" style="left:685px;top:464.11px;font-size:14.7px;color:#1a1a1a;font-weight:700;letter-spacing:-0.250px;">To:</div>
<div class="t" style="left:709.7px;top:464.11px;font-size:14.7px;color:#1a63c1;letter-spacing:0.007px;">SteveACooper@dayrep.us</div>
<div class="a" style="left:709.7px;top:479.1px;width:175.1px;height:1px;background:#1a63c1;"></div>
<div class="t" style="left:685px;top:485.70px;font-size:14.7px;color:#1a1a1a;font-weight:700;letter-spacing:-0.494px;">Subject:</div>
<div class="t" style="left:743.3px;top:485.70px;font-size:14.7px;color:#1a1a1a;letter-spacing:0.048px;">RE: Personal Loan Application (Amount $8000) - Repayment 3 years</div>
<div class="t" style="left:685px;top:527.30px;font-size:14.7px;color:#1a1a1a;letter-spacing:0.239px;">Dear Manager (Administration Team),</div>
<div class="t" style="left:685px;top:568.90px;font-size:14.7px;color:#1a1a1a;letter-spacing:0.150px;">Can you please look into this application pending for your approval, since a week?</div>
<div class="t" style="left:685px;top:612.30px;font-size:14.7px;color:#1a1a1a;letter-spacing:-0.295px;">Thanks</div>
<div class="t" style="left:685px;top:655.00px;font-size:14.7px;color:#1a1a1a;font-weight:700;letter-spacing:-0.405px;">From:</div>
<div class="t" style="left:728.2px;top:655.00px;font-size:14.7px;color:#1a63c1;letter-spacing:-0.077px;">KateCBrea@dayrep.us</div>
<div class="a" style="left:728.2px;top:670.0px;width:149.8px;height:1px;background:#1a63c1;"></div>
<div class="t" style="left:685px;top:676.71px;font-size:14.7px;color:#1a1a1a;font-weight:700;letter-spacing:-0.564px;">Sent:</div>
<div class="t" style="left:723.8px;top:676.71px;font-size:14.7px;color:#1a1a1a;letter-spacing:0.124px;">15 November 2019 16:04</div>
<div class="t" style="left:685px;top:697.50px;font-size:14.7px;color:#1a1a1a;font-weight:700;letter-spacing:-0.250px;">To:</div>
<div class="t" style="left:709.6px;top:697.50px;font-size:14.7px;color:#1a63c1;letter-spacing:-0.192px;">DaveJRose@dayrep.us</div>
<div class="a" style="left:709.6px;top:712.5px;width:151.7px;height:1px;background:#1a63c1;"></div>
<div class="t" style="left:685px;top:719.11px;font-size:14.7px;color:#1a1a1a;font-weight:700;letter-spacing:-0.494px;">Subject:</div>
<div class="t" style="left:743.4px;top:719.11px;font-size:14.7px;color:#1a1a1a;letter-spacing:0.116px;">Personal Loan Application (Amount $8000) - Repayment 3 years</div>
<div class="t" style="left:685px;top:761.50px;font-size:14.7px;color:#1a1a1a;letter-spacing:0.139px;">The Manger,</div>
<svg style="left:1103px;top:794px;" width="15" height="15" viewBox="0 0 15 15"><circle cx="7.5" cy="7.5" r="6.6" fill="none" stroke="#666" stroke-width="1.1"/><path d="M5 5L10 10M10 5L5 10" stroke="#666" stroke-width="1.1"/></svg>
<div class="t" style="left:1121.7px;top:796.77px;font-size:12.5px;color:#555;letter-spacing:0.553px;">Working Offline</div>
<div class="a" style="left:1237px;top:790px;width:45px;height:23.5px;background:#d4d4d4;"></div>
<svg style="left:1251.5px;top:794.5px;" width="16" height="15" viewBox="0 0 16 15"><rect x="0.8" y="0.8" width="14.4" height="13.4" fill="none" stroke="#444" stroke-width="1.4"/><path d="M0.8 4H15.2M4.5 4V14.2M11.5 4V14.2" stroke="#444" stroke-width="1.2"/></svg>
<svg style="left:1295.5px;top:794.5px;" width="16" height="15" viewBox="0 0 16 15"><path d="M0.8 1.5H7.2V14H0.8ZM8.8 1.5H15.2V14H8.8Z" fill="none" stroke="#555" stroke-width="1.2"/><path d="M2.5 4.5H5.5M2.5 7H5.5M2.5 9.5H5.5M10.5 4.5H13.5M10.5 7H13.5M10.5 9.5H13.5" stroke="#777" stroke-width="0.9"/></svg>
<div class="a" style="left:1333px;top:801px;width:9px;height:1.5px;background:#555;"></div>
<div class="a" style="left:1348px;top:801.5px;width:111px;height:1px;background:#a8a8a8;"></div>
<div class="a" style="left:1401px;top:795.5px;width:6px;height:12.5px;background:#7a7a7a;"></div>
<div class="a" style="left:1465px;top:801px;width:9.5px;height:1.5px;background:#555;"></div>
<div class="a" style="left:1469px;top:796.5px;width:1.5px;height:10.5px;background:#555;"></div>
<div class="t" style="left:1487.6px;top:796.77px;font-size:12.5px;color:#444;letter-spacing:-0.396px;">100%</div>
<div class="a" style="left:195.5px;top:814px;width:1.5px;height:44px;background:#3a6f8c;"></div>
<div class="a" style="left:262px;top:814px;width:1.5px;height:44px;background:#3a6f8c;"></div>
<div class="a" style="left:264.5px;top:814px;width:1.5px;height:44px;background:#3a6f8c;"></div>
<div class="a" style="left:331.5px;top:814px;width:1.5px;height:44px;background:#3a6f8c;"></div>
<div class="a" style="left:334px;top:814px;width:1.5px;height:44px;background:#3a6f8c;"></div>
<div class="a" style="left:401px;top:814px;width:1.5px;height:44px;background:#3a6f8c;"></div>
<div class="a" style="left:471px;top:814px;width:1.5px;height:44px;background:#3a6f8c;"></div>
<div class="a" style="left:540px;top:814px;width:1.5px;height:44px;background:#3a6f8c;"></div>
<div class="a" style="left:599.5px;top:814px;width:1.5px;height:44px;background:#3a6f8c;"></div>
<div class="a" style="left:604px;top:814px;width:1.5px;height:44px;background:#3a6f8c;"></div>
<div class="a" style="left:609px;top:814px;width:1.2px;height:44px;background:#2a5a74;"></div>
<div class="a" style="left:611.5px;top:814px;width:68px;height:44.5px;background:#a3d9f3;border:1.3px solid #17303f"></div>
<div class="a" style="left:1526.5px;top:813px;width:1.5px;height:46px;background:#1b3a4e;"></div>
<svg style="left:12.5px;top:820px;" width="31" height="30" viewBox="0 0 31 30"><path d="M0.5 4.2L12.6 2.5V14.2H0.5ZM14.3 2.2L30.5 0V14.2H14.3ZM0.5 15.8H12.6V27.5L0.5 25.8ZM14.3 15.8H30.5V30L14.3 27.8Z" fill="#fff"/></svg>
<svg style="left:71.5px;top:818px;" width="37" height="35" viewBox="0 0 37 35"><rect x="1" y="1" width="17" height="33" rx="2" fill="#1a7fd8" stroke="#e6f4fc" stroke-width="1.3"/><rect x="3.5" y="4" width="12" height="5" fill="#3796e4"/><rect x="12" y="16.5" width="24" height="18" rx="2.5" fill="#6f8598" stroke="#e6f4fc" stroke-width="1.4"/><path d="M20 16.5V14H28V16.5" fill="none" stroke="#e6f4fc" stroke-width="1.3"/><path d="M15 23.5H33" stroke="#e6f4fc" stroke-width="1.3"/><circle cx="17" cy="23.5" r="1.3" fill="#e6f4fc"/><circle cx="31" cy="23.5" r="1.3" fill="#e6f4fc"/></svg>
<svg style="left:141px;top:820px;" width="37" height="33" viewBox="0 0 37 33"><path d="M1 3.5H13L15.5 6H35V30H1Z" fill="#f3c968" stroke="#d9a93b" stroke-width="1"/><rect x="4" y="1" width="24" height="10" fill="#fff" stroke="#ccc" stroke-width="0.8"/><circle cx="9" cy="4" r="1.6" fill="#3aa55d"/><circle cx="17" cy="5" r="1.6" fill="#e5533d"/><circle cx="25" cy="6" r="1.6" fill="#2b88d8"/><path d="M1 10H35V30H1Z" fill="#fbe39a" stroke="#d9a93b" stroke-width="1"/><path d="M7 32V21Q7 18.5 9.5 18.5H26.5Q29 18.5 29 21V32M12 32V25H24V32" fill="none" stroke="#8ccbef" stroke-width="2.6"/></svg>
<svg style="left:211.5px;top:820px;" width="34" height="34" viewBox="0 0 34 34"><path d="M17 17L31.29 8.75A16.5 16.5 0 0 0 2.71 8.75Z" fill="#db4437"/><path d="M17 17L17 33.5A16.5 16.5 0 0 0 31.29 8.75Z" fill="#ffcd40"/><path d="M17 17L2.71 8.75A16.5 16.5 0 0 0 17 33.5Z" fill="#0f9d58"/><circle cx="17" cy="17" r="7.8" fill="#fff"/><circle cx="17" cy="17" r="6.2" fill="#4285f4"/></svg>
<svg style="left:281px;top:819px;" width="34" height="34" viewBox="0 0 34 34"><defs><linearGradient id="sg" x1="0" y1="0" x2="1" y2="1"><stop offset="0" stop-color="#ffffff"/><stop offset="1" stop-color="#d9dde8"/></linearGradient></defs><path d="M6 1H20Q33 1 33 17Q33 33 17 33H8Q1 33 1 26V6Q1 1 6 1Z" fill="url(#sg)" stroke="#2f4a66" stroke-width="1.6"/><path d="M25.13 13.63 L25.67 15.49 L28.42 15.65 L28.42 18.35 L25.67 18.51 L25.13 20.37 L24.20 22.06 L26.03 24.12 L24.12 26.03 L22.06 24.20 L20.37 25.13 L18.51 25.67 L18.35 28.42 L15.65 28.42 L15.49 25.67 L13.63 25.13 L11.94 24.20 L9.88 26.03 L7.97 24.12 L9.80 22.06 L8.87 20.37 L8.33 18.51 L5.58 18.35 L5.58 15.65 L8.33 15.49 L8.87 13.63 L9.80 11.94 L7.97 9.88 L9.88 7.97 L11.94 9.80 L13.63 8.87 L15.49 8.33 L15.65 5.58 L18.35 5.58 L18.51 8.33 L20.37 8.87 L22.06 9.80 L24.12 7.97 L26.03 9.88 L24.20 11.94Z" fill="#dfe3ea" stroke="#9aa3b3" stroke-width="1.3"/><circle cx="17" cy="17" r="4.3" fill="#b9cdea" stroke="#9aa3b3" stroke-width="1.1"/></svg>
<svg style="left:351px;top:819px;" width="34" height="34" viewBox="0 0 34 34"><circle cx="18" cy="16" r="15.5" fill="#f26522"/><path d="M2 33L5 27L9.5 31Z" fill="#f26522"/><path d="M11 27L21 13" stroke="#fff" stroke-width="5.5" stroke-linecap="round"/><path d="M11 27L21 13" stroke="#9a9a9a" stroke-width="3" stroke-linecap="round"/><path d="M9 22L15 15" stroke="#f6c24a" stroke-width="1.6"/><circle cx="22.5" cy="10.5" r="5.2" fill="#fff"/><circle cx="22.5" cy="10.5" r="3.6" fill="#8c8c8c"/><path d="M25 8.5L22.3 10.5L25 12.5" fill="none" stroke="#fff" stroke-width="1.2"/></svg>
<svg style="left:421px;top:819px;" width="33" height="34" viewBox="0 0 33 34"><circle cx="16.5" cy="17" r="15.5" fill="#f37b2e"/><path d="M9 25L6.5 13L15 6L25 9L27 21L19 28Z" fill="none" stroke="#8ccdeb" stroke-width="1.3"/><circle cx="16.5" cy="17" r="4.5" fill="none" stroke="#fbd0b0" stroke-width="2"/><circle cx="16.5" cy="17" r="1.6" fill="#fbd0b0"/><path d="M3 21Q1.5 16 3 12" stroke="#5ec1eb" stroke-width="1.5" fill="none"/></svg>
<svg style="left:490px;top:817px;" width="34" height="37" viewBox="0 0 34 37"><path d="M1.5 4H22L28 10V36H1.5Z" fill="#fff" stroke="#999" stroke-width="1"/><path d="M1.5 20H28V36H1.5Z" fill="#5cb547"/><path d="M1.5 28H28V36H1.5Z" fill="#a3d17a"/><path d="M7 30V14Q7 11 10 11Q13 11 13 14V30" fill="none" stroke="#222" stroke-width="2"/><path d="M15 17H21M18 14V20M21 17H26M23.5 14V20" stroke="#222" stroke-width="1.4"/><path d="M21 28L32 4" stroke="#e8a33c" stroke-width="3.5"/><path d="M31 2.5L33 3.5" stroke="#c0392b" stroke-width="3"/></svg>
<svg style="left:553.5px;top:822px;" width="34" height="27" viewBox="0 0 34 27"><rect x="0.5" y="0.5" width="33" height="26" fill="#0c0c0c" stroke="#9aa" stroke-width="1"/><rect x="0.5" y="0.5" width="33" height="3" fill="#c9d2da"/><text x="3.5" y="13" font-family="Liberation Mono" font-size="7.5" font-weight="700" fill="#fff">C:\</text><path d="M21 14.5H30" stroke="#fff" stroke-width="1.6"/></svg>
<svg style="left:627.5px;top:819.5px;" width="37" height="35" viewBox="0 0 37 35"><rect x="10" y="1" width="25" height="26" rx="2" fill="#1490df"/><rect x="22" y="1" width="13" height="13" fill="#28a8ea"/><rect x="10" y="14" width="12" height="13" fill="#0364b8"/><rect x="1" y="7" width="19" height="19" rx="2" fill="#0a5ab3"/><circle cx="10.5" cy="16.5" r="5.3" fill="none" stroke="#fff" stroke-width="2.5"/><circle cx="28" cy="28" r="7" fill="#e0553d"/><path d="M25 25L31 31M31 25L25 31" stroke="#fff" stroke-width="1.8"/></svg>
<svg style="left:1270px;top:833.5px;" width="9" height="5.5" viewBox="0 0 9 5.5"><path d="M0 5.5L4.5 0L9 5.5Z" fill="#0b1e30"/></svg>
<svg style="left:1292px;top:827px;" width="18" height="17" viewBox="0 0 18 17"><circle cx="9" cy="8.5" r="7.2" fill="#fff" stroke="#e5572a" stroke-width="2.4"/></svg>
<svg style="left:1318.5px;top:827px;" width="20" height="18" viewBox="0 0 20 18"><path d="M1.5 17.5V1" stroke="#fff" stroke-width="1.8"/><path d="M2 1.5H9V4H15V11H9V9H2" fill="#f4f4f4" stroke="#8aa" stroke-width="0.8"/><circle cx="13.5" cy="12.5" r="5" fill="#e5533d"/><path d="M11.3 10.3L15.7 14.7M15.7 10.3L11.3 14.7" stroke="#fff" stroke-width="1.5"/></svg>
<svg style="left:1346.5px;top:827px;" width="19" height="17" viewBox="0 0 19 17"><circle cx="4" cy="4" r="3.2" fill="none" stroke="#fff" stroke-width="1.5"/><path d="M4 7V14" stroke="#fff" stroke-width="1.5"/><rect x="7" y="3" width="11" height="9" fill="none" stroke="#fff" stroke-width="1.5"/><path d="M12.5 12V15M8.5 15.5H16.5" stroke="#fff" stroke-width="1.5"/></svg>
<svg style="left:1373.5px;top:828px;" width="18" height="17" viewBox="0 0 18 17"><path d="M1 5.5H4L9 1V15L4 11H1Z" fill="#f4f4f4" stroke="#778" stroke-width="0.8"/><circle cx="13" cy="12" r="5" fill="#e5533d"/><path d="M10.8 9.8L15.2 14.2M15.2 9.8L10.8 14.2" stroke="#fff" stroke-width="1.5"/></svg>
<div class="t" style="left:1407.3px;top:831.08px;font-size:12.5px;color:#0b1e30;letter-spacing:-0.765px;">ENG</div>
<div class="t" style="left:1456.2px;top:821.38px;font-size:12.5px;color:#0b1e30;letter-spacing:-0.038px;">3:45 PM</div>
<div class="t" style="left:1451.7px;top:839.38px;font-size:12.5px;color:#0b1e30;letter-spacing:0.110px;">7/29/2020</div>
</div></body></html>
